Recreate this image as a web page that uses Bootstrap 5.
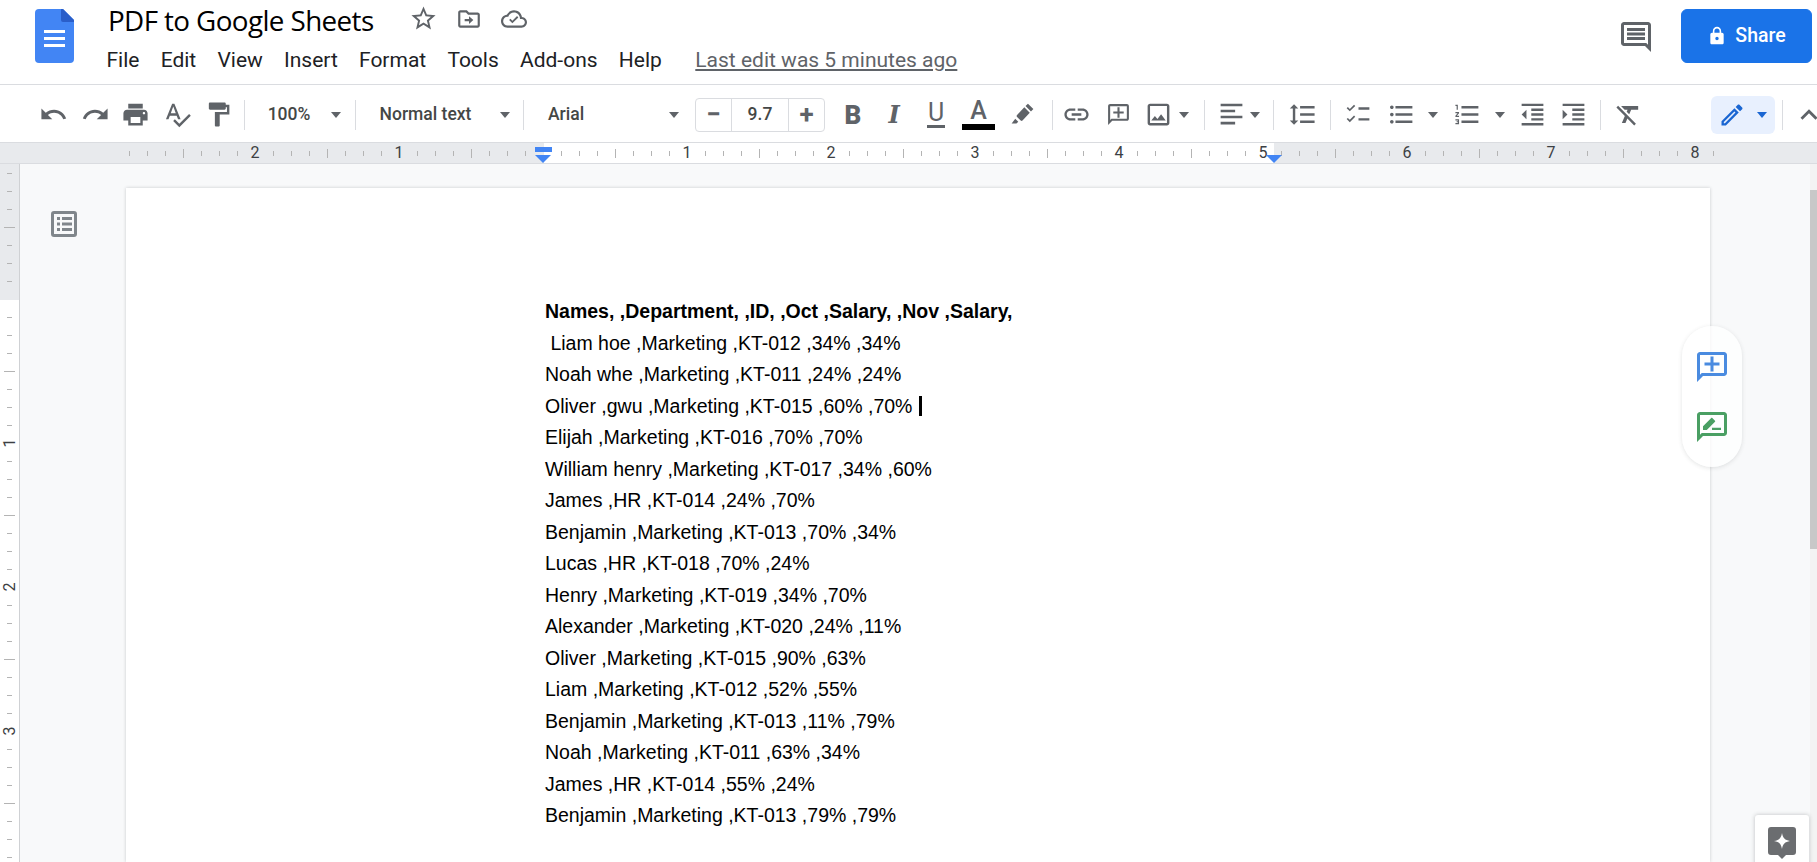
<!DOCTYPE html>
<html lang="en">
<head>
<meta charset="utf-8">
<title>PDF to Google Sheets</title>
<link href="https://cdn.jsdelivr.net/npm/bootstrap@5.3.0/dist/css/bootstrap.min.css" rel="stylesheet">
<style>
html,body{height:100%;}
body{font-family:Roboto,"Liberation Sans",sans-serif;background:#fff;overflow:hidden;color:#202124;}
svg{display:block;fill:currentColor;flex:none;}
.app{height:862px;}
.topbar{height:85px;border-bottom:1px solid #dadce0;padding-left:35px;}
.logo{width:39px;height:54px;margin-top:9px;}
.title-col{margin-left:34px;}
.doc-title{font-family:"Open Sans",Roboto,sans-serif;font-size:27.8px;line-height:34px;margin:3px 0 0 0;color:#000;font-weight:400;width:293px;letter-spacing:-.6px;}
.title-ico{color:#5f6368;width:45px;display:flex;justify-content:center;}
.ic-star{width:29px;height:29px;}
.ic-folder{width:26px;height:26px;}
.ic-cloud{width:26px;height:26px;}
.menu-row{font-size:21px;line-height:24px;margin-top:11px;margin-left:-1.500px;}
.menu-row span{color:#202124;margin-right:21.200px;}
.menu-row .mi-help{margin-right:33.500px;}
.menu-row .last-edit{color:#5f6368;text-decoration:underline;text-underline-offset:2px;margin-right:0;}
.right-tools{margin-right:5px;margin-top:9px;}
.chat-ico{width:36px;height:36px;color:#5f6368;margin:10px 27px 0 0;}
.share-btn{--bs-btn-bg:#1a73e8;--bs-btn-border-color:#1a73e8;--bs-btn-hover-bg:#1a73e8;--bs-btn-hover-border-color:#1a73e8;--bs-btn-color:#fff;--bs-btn-hover-color:#fff;width:131px;height:54px;border-radius:6px;font-size:19.5px;font-weight:500;padding:0;gap:8px;}
.share-btn svg{width:20px;height:20px;}
.toolbar{height:58px;border-bottom:1px solid #dadce0;padding:2px 0 0 32px;display:grid;align-items:center;overflow:hidden;color:#5f6368;
grid-template-columns:42px 42px 39px 45px 37px 14px 76px 18px 20px 121px 37px 1px 128px 43px 130px 56px 26px 58px 27px 60px 1px 46px 38px 42px 10px 30px 24px 23px 15px 43px 13px 42px 44px 19px 51px 13px 53px 29px 25px 30px 68px 64px 14px 39px;}
.tcell{display:flex;align-items:center;justify-content:center;height:38px;}
.tcell svg{width:29px;height:29px;}
.tcell .ic-add{width:25px;height:25px;}
.tsep{width:1px;height:30px;background:#dadce0;}
.tri{width:0;height:0;border-left:5.500px solid transparent;border-right:5.500px solid transparent;border-top:6px solid #5f6368;}
.ttext{font-size:17.5px;font-weight:500;color:#444746;}
.tleft{justify-content:flex-start;padding-left:24px;}
.stepper{height:34px;border:1px solid #dadce0;border-radius:4px;font-size:17.5px;font-weight:500;color:#444746;}
.stepper span{display:flex;align-items:center;justify-content:center;height:100%;}
.st-side{width:35px;font-size:26px;font-weight:700;color:#5f6368;}
.st-mid{flex:1;border-left:1px solid #dadce0;border-right:1px solid #dadce0;}
.fmt-b{font-size:26px;font-weight:900;line-height:1;}
.fmt-i{font-family:"DejaVu Serif",serif;font-size:24px;font-weight:700;font-style:italic;line-height:1;}
.fmt-u{font-size:25px;font-weight:400;line-height:22px;height:26px;width:18px;text-align:center;border-bottom:3px solid #5f6368;}
.fmt-a{font-size:25px;font-weight:500;line-height:24px;text-align:center;}
.fmt-bar{width:33px;height:6px;background:#000;margin-top:1px;}
.pen-pill{height:38px;background:#e8f0fe;border-radius:6px;color:#1a66d2;gap:11px;padding-left:7px;justify-content:flex-start;}
.tcell.pen-pill svg{width:28px;height:28px;}
.pen-pill .tri{border-top-color:#1a66d2;}
.chev{color:#5f6368;}
.tcell.chev svg{width:34px;height:34px;}
.ruler-h{height:21px;position:relative;border-bottom:1px solid #dadce0;font-size:16px;line-height:20px;color:#3c4043;
background:linear-gradient(90deg,#e8eaed 544px,#fff 544px,#fff 1274px,#e8eaed 1274px);padding-left:183px;}
.rtick{position:absolute;left:129px;width:1587px;top:0;height:20px;background-repeat:repeat-x;
background-image:linear-gradient(90deg,transparent 18px,#b4b4b4 18px,#b4b4b4 19px,transparent 19px,transparent 36px,#b4b4b4 36px,#b4b4b4 37px,transparent 37px,transparent 54px,#b4b4b4 54px,#b4b4b4 55px,transparent 55px,transparent 90px,#b4b4b4 90px,#b4b4b4 91px,transparent 91px,transparent 108px,#b4b4b4 108px,#b4b4b4 109px,transparent 109px,transparent 126px,#b4b4b4 126px,#b4b4b4 127px,transparent 127px),
linear-gradient(90deg,transparent 72px,#b4b4b4 72px,#b4b4b4 73px,transparent 73px);
background-size:144px 5px,144px 9px;background-position:126px 8px,126px 6px;}
.rnum{width:144px;text-align:center;flex:none;position:relative;}
.mk-rect{position:absolute;left:535px;top:4px;width:17px;height:5px;background:#4285f4;}
.mk-tri{position:absolute;top:12px;width:0;height:0;border-left:8px solid transparent;border-right:8px solid transparent;border-top:8px solid #4285f4;}
.mk-a{left:535px;}.mk-b{left:1266px;}
.stage{height:698px;position:relative;overflow:hidden;}
.ruler-v{width:20px;flex:none;border-right:1px solid #cfd1d4;padding-top:207px;font-size:16px;color:#3c4043;background-repeat:repeat-y,repeat-y,no-repeat;
background-image:linear-gradient(180deg,transparent 18px,#b4b4b4 18px,#b4b4b4 19px,transparent 19px,transparent 36px,#b4b4b4 36px,#b4b4b4 37px,transparent 37px,transparent 54px,#b4b4b4 54px,#b4b4b4 55px,transparent 55px,transparent 90px,#b4b4b4 90px,#b4b4b4 91px,transparent 91px,transparent 108px,#b4b4b4 108px,#b4b4b4 109px,transparent 109px,transparent 126px,#b4b4b4 126px,#b4b4b4 127px,transparent 127px),
linear-gradient(180deg,transparent 72px,#b4b4b4 72px,#b4b4b4 73px,transparent 73px),
linear-gradient(180deg,#e8eaed 136px,#fff 136px);
background-size:5px 144px,11px 144px,100% 100%;background-position:7px 135px,4px 135px,0 0;}
.vnum{height:144px;display:flex;align-items:center;justify-content:center;}
.vnum span{transform:rotate(-90deg);display:block;line-height:1;}
.canvas{flex:1;background:#f8f9fa;}
.gutter{width:106px;flex:none;padding:47px 0 0 31px;color:#80868b;}
.gutter svg{width:26px;height:26px;}
.sheet{width:1584px;flex:none;margin-top:24px;background:#fff;box-shadow:0 0 3px rgba(60,64,67,.25);padding:108px 0 0 419px;font-family:"Liberation Sans",Arial,sans-serif;font-size:19.5px;line-height:31.5px;color:#000;}
.sheet p{margin:0;white-space:pre;}
.doc-caret{display:inline-block;width:3px;height:20px;background:#000;vertical-align:-3px;margin-left:1px;}
.railbar{width:7px;flex:none;background:#f3f3f3;padding-top:26px;}
.thumb{height:359px;background:#c8c8c8;}
.fab{position:absolute;left:1682px;top:162px;width:60px;height:141px;border-radius:30px;background:rgba(255,255,255,.75);box-shadow:0 1px 4px rgba(60,64,67,.15);gap:24px;padding-top:23px;}
.fab svg{width:36px;height:36px;}
.fab-blue{color:#4a8be0;}.fab-green{color:#4a9f63;}
.explore{position:absolute;left:1755px;top:651px;width:54px;height:60px;background:#fff;border-radius:3px 3px 0 0;box-shadow:0 0 4px rgba(60,64,67,.3);padding:12px 0 0 13px;}
.explore svg{width:28px;height:32px;}
</style>
</head>
<body>
<div class="app d-flex flex-column">
  <header class="topbar d-flex">
    <svg class="logo" viewBox="0 0 39 54" aria-hidden="true"><path fill="#4285f4" d="M4 0h24l11 11v39a4 4 0 0 1-4 4H4a4 4 0 0 1-4-4V4a4 4 0 0 1 4-4z"/><path fill="#2a5ec9" d="M26 0h2l11 11v2H28a2 2 0 0 1-2-2z"/><path fill="#fff" d="M9 21h21v3H9zM9 28h21v3H9zM9 35h21v3H9z"/></svg>
    <div class="title-col d-flex flex-column flex-grow-1">
      <div class="d-flex align-items-center">
        <h1 class="doc-title">PDF to Google Sheets</h1>
        <span class="title-ico"><svg class="ic-star" viewBox="0 0 24 24"><path d="M22 9.240l-7.190-.62L12 2 9.190 8.630 2 9.240l5.460 4.730L5.820 21 12 17.270 18.180 21l-1.630-7.030L22 9.240zM12 15.400l-3.760 2.270 1-4.280-3.320-2.880 4.380-.38L12 6.100l1.710 4.040 4.380.38-3.320 2.880 1 4.280L12 15.400z"/></svg></span>
        <span class="title-ico"><svg class="ic-folder" viewBox="0 0 24 24"><path d="M20 6h-8l-2-2H4c-1.100 0-1.990.9-1.990 2L2 18c0 1.100.9 2 2 2h16c1.100 0 2-.9 2-2V8c0-1.100-.9-2-2-2zm0 12H4V6h5.170l2 2H20v10zm-8-1.500V14H8v-2h4V9.500l4 3.500z"/></svg></span>
        <span class="title-ico"><svg class="ic-cloud" viewBox="0 0 24 24"><path d="M19.350 10.040C18.670 6.590 15.640 4 12 4 9.110 4 6.600 5.640 5.350 8.040 2.340 8.360 0 10.910 0 14c0 3.310 2.690 6 6 6h13c2.760 0 5-2.240 5-5 0-2.640-2.050-4.780-4.650-4.960zM19 18H6c-2.210 0-4-1.790-4-4s1.790-4 4-4h.71C7.370 7.690 9.480 6 12 6c3.040 0 5.500 2.460 5.500 5.500v.5H19c1.660 0 3 1.340 3 3s-1.340 3-3 3zM10.500 16l-3-3 1.200-1.200 1.800 1.800 4.300-4.300 1.200 1.200z"/></svg></span>
      </div>
      <div class="menu-row d-flex">
        <span>File</span><span>Edit</span><span>View</span><span>Insert</span><span>Format</span><span>Tools</span><span>Add-ons</span><span class="mi-help">Help</span><span class="last-edit">Last edit was 5 minutes ago</span>
      </div>
    </div>
    <div class="right-tools d-flex align-items-start">
      <svg class="chat-ico" viewBox="0 0 24 24"><path d="M21.990 4c0-1.100-.89-2-1.990-2H4c-1.100 0-2 .9-2 2v12c0 1.100.9 2 2 2h14l4 4-.01-18zM20 4v13.170L18.830 16H4V4h16zM6 12h12v2H6zm0-3h12v2H6zm0-3h12v2H6z"/></svg>
      <button class="btn share-btn d-flex align-items-center justify-content-center" type="button"><svg viewBox="0 0 24 24"><path d="M18 8h-1V6c0-2.760-2.240-5-5-5S7 3.240 7 6v2H6c-1.100 0-2 .9-2 2v10c0 1.100.9 2 2 2h12c1.100 0 2-.9 2-2V10c0-1.100-.9-2-2-2zm-6 9c-1.100 0-2-.9-2-2s.9-2 2-2 2 .9 2 2-.9 2-2 2zm3.100-9H8.900V6c0-1.710 1.390-3.100 3.100-3.100 1.710 0 3.100 1.390 3.100 3.100v2z"/></svg>Share</button>
    </div>
  </header>

  <div class="toolbar">
    <div class="tcell"><svg viewBox="0 0 24 24"><path d="M12.500 8c-2.650 0-5.050.99-6.900 2.600L2 7v9h9l-3.620-3.620c1.390-1.160 3.160-1.880 5.120-1.880 3.540 0 6.550 2.310 7.600 5.500l2.370-.78C21.080 11.030 17.150 8 12.500 8z"/></svg></div>
    <div class="tcell"><svg viewBox="0 0 24 24"><path d="M18.400 10.600C16.550 8.990 14.150 8 11.500 8c-4.650 0-8.580 3.030-9.960 7.220L3.900 16c1.050-3.190 4.050-5.500 7.600-5.500 1.950 0 3.730.72 5.120 1.880L13 16h9V7l-3.600 3.600z"/></svg></div>
    <div class="tcell"><svg viewBox="0 0 24 24"><path d="M19 8H5c-1.660 0-3 1.340-3 3v6h4v4h12v-4h4v-6c0-1.660-1.340-3-3-3zm-3 11H8v-5h8v5zm3-7c-.55 0-1-.45-1-1s.45-1 1-1 1 .45 1 1-.45 1-1 1zm-1-9H6v4h12V3z"/></svg></div>
    <div class="tcell"><svg viewBox="0 0 24 24"><path d="M12.450 16h2.090L9.430 3H7.570L2.460 16h2.090l1.120-3h5.640l1.140 3zm-6.020-5L8.500 5.480 10.570 11H6.430zm15.160.59l-8.090 8.090L9.830 16l-1.410 1.410 5.090 5.090L23 13l-1.410-1.410z"/></svg></div>
    <div class="tcell"><svg viewBox="0 0 24 24"><path d="M18 4V3c0-.55-.45-1-1-1H5c-.55 0-1 .45-1 1v4c0 .55.45 1 1 1h12c.55 0 1-.45 1-1V6h1v4H9v11c0 .55.45 1 1 1h2c.55 0 1-.45 1-1v-9h8V4h-3z"/></svg></div>
    <div class="tcell"><div class="tsep"></div></div>
    <div class="tcell ttext">100%</div>
    <div class="tcell"><div class="tri"></div></div>
    <div class="tcell"><div class="tsep"></div></div>
    <div class="tcell ttext">Normal text</div>
    <div class="tcell"><div class="tri"></div></div>
    <div class="tcell"><div class="tsep"></div></div>
    <div class="tcell ttext tleft">Arial</div>
    <div class="tcell"><div class="tri"></div></div>
    <div class="stepper d-flex"><span class="st-side">&#8722;</span><span class="st-mid">9.7</span><span class="st-side">+</span></div>
    <div class="tcell fmt-b">B</div>
    <div class="tcell fmt-i">I</div>
    <div class="tcell"><div class="fmt-u">U</div></div>
    <div class="tcell"><div class="d-flex flex-column align-items-center"><div class="fmt-a">A</div><div class="fmt-bar"></div></div></div>
    <div class="tcell"><svg viewBox="0 0 24 24"><path d="M16.500 3 21 7.500l-2 2L14.500 5zM13.500 6l4.500 4.500-6 6.500c-.5.5-1 .5-1.500 0l-3-3c-.5-.5-.5-1 0-1.500zM6 15.500 8.500 18 7 19.500H3z"/></svg></div>
    <div class="tcell"><div class="tsep"></div></div>
    <div class="tcell"><svg viewBox="0 0 24 24"><path d="M3.900 12c0-1.710 1.390-3.100 3.100-3.100h4V7H7c-2.760 0-5 2.240-5 5s2.240 5 5 5h4v-1.900H7c-1.710 0-3.100-1.390-3.100-3.100zM8 13h8v-2H8v2zm9-6h-4v1.900h4c1.710 0 3.100 1.390 3.100 3.100s-1.390 3.100-3.100 3.100h-4V17h4c2.760 0 5-2.240 5-5s-2.240-5-5-5z"/></svg></div>
    <div class="tcell"><svg class="ic-add" viewBox="0 0 24 24"><path d="M20 2H4c-1.100 0-2 .9-2 2v18l4-4h14c1.100 0 2-.9 2-2V4c0-1.100-.9-2-2-2zm0 14H5.170L4 17.170V4h16v12zM13 5h-2v4H7v2h4v4h2v-4h4V9h-4z"/></svg></div>
    <div class="tcell"><svg viewBox="0 0 24 24"><path d="M19 5v14H5V5h14m0-2H5c-1.100 0-2 .9-2 2v14c0 1.100.9 2 2 2h14c1.100 0 2-.9 2-2V5c0-1.100-.9-2-2-2zm-4.860 8.860l-3 3.870L9 13.140 6 17h12l-3.860-5.140z"/></svg></div>
    <div class="tcell"><div class="tri"></div></div>
    <div class="tcell"><div class="tsep"></div></div>
    <div class="tcell"><svg viewBox="0 0 24 24"><path d="M3 3h18v2.200H3zM3 8h12v2.200H3zM3 13h18v2.200H3zM3 18h12v2.200H3z"/></svg></div>
    <div class="tcell"><div class="tri"></div></div>
    <div class="tcell"><div class="tsep"></div></div>
    <div class="tcell"><svg viewBox="0 0 24 24"><path d="M6 7h2.500L5 3.500 1.500 7H4v10H1.500L5 20.500 8.500 17H6V7zm4-2v2h12V5H10zm0 14h12v-2H10v2zm0-6h12v-2H10v2z"/></svg></div>
    <div class="tcell"><div class="tsep"></div></div>
    <div class="tcell"><svg viewBox="0 0 24 24"><path d="M2.200 6.800 3.200 5.800 4.800 7.400 8.300 3.900 9.300 4.900 4.800 9.400zM2.200 15.800 3.200 14.800 4.800 16.400 8.300 12.900 9.300 13.900 4.800 18.400zM12 6h9v2h-9zM12 15h9v2h-9z"/></svg></div>
    <div class="tcell"><svg viewBox="0 0 24 24"><path d="M4 10.500c-.83 0-1.500.67-1.500 1.500s.67 1.500 1.500 1.500 1.500-.67 1.500-1.500-.67-1.500-1.500-1.500zm0-6c-.83 0-1.500.67-1.500 1.500S3.170 7.500 4 7.500 5.500 6.830 5.500 6 4.830 4.500 4 4.500zm0 12c-.83 0-1.500.68-1.500 1.500s.68 1.500 1.500 1.500 1.500-.68 1.500-1.500-.67-1.500-1.500-1.500zM7 19h14v-2H7v2zm0-6h14v-2H7v2zm0-8v2h14V5H7z"/></svg></div>
    <div class="tcell"><div class="tri"></div></div>
    <div class="tcell"><svg viewBox="0 0 24 24"><path d="M2 17h2v.5H3v1h1v.5H2v1h3v-4H2v1zm1-9h1V4H2v1h1v3zm-1 3h1.800L2 13.100v.9h3v-1H3.200L5 10.900V10H2v1zm5-6v2h14V5H7zm0 14h14v-2H7v2zm0-6h14v-2H7v2z"/></svg></div>
    <div class="tcell"><div class="tri"></div></div>
    <div class="tcell"><svg viewBox="0 0 24 24"><path d="M11 17h10v-2H11v2zm-8-5l4 4V8l-4 4zm0 9h18v-2H3v2zM3 3v2h18V3H3zm8 6h10V7H11v2zm0 4h10v-2H11v2z"/></svg></div>
    <div class="tcell"><svg viewBox="0 0 24 24"><path d="M3 21h18v-2H3v2zM3 8v8l4-4-4-4zm8 9h10v-2H11v2zM3 3v2h18V3H3zm8 6h10V7H11v2zm0 4h10v-2H11v2z"/></svg></div>
    <div class="tcell"><div class="tsep"></div></div>
    <div class="tcell"><svg viewBox="0 0 24 24"><path d="M6 5v.18L8.820 8h2.400l-.72 1.680 2.100 2.100L14.210 8H20V5H6zM3.410 4.860L2 6.270l6.970 6.970L6.500 19h3l1.570-3.660L16.730 21l1.410-1.410z"/></svg></div>
    <div></div>
    <div class="tcell pen-pill"><svg viewBox="0 0 24 24"><path d="M3 17.250V21h3.750L17.810 9.940l-3.750-3.750L3 17.250zM5.920 19H5v-.92l9.060-9.060.92.92L5.920 19zM20.710 5.630l-2.340-2.340c-.2-.2-.45-.29-.71-.29s-.51.1-.7.29l-1.830 1.830 3.750 3.750 1.830-1.830c.39-.39.39-1.020 0-1.410z"/></svg><div class="tri"></div></div>
    <div class="tcell"><div class="tsep"></div></div>
    <div class="tcell chev"><svg viewBox="0 0 24 24"><path d="M7.410 15.410L12 10.830l4.590 4.580L18 14l-6-6-6 6z"/></svg></div>
  </div>

  <div class="ruler-h d-flex">
    <div class="rtick"></div>
    <span class="rnum">2</span><span class="rnum">1</span><span class="rnum"></span><span class="rnum">1</span><span class="rnum">2</span><span class="rnum">3</span><span class="rnum">4</span><span class="rnum">5</span><span class="rnum">6</span><span class="rnum">7</span><span class="rnum">8</span>
    <div class="mk-rect"></div><div class="mk-tri mk-a"></div><div class="mk-tri mk-b"></div>
  </div>

  <div class="stage d-flex">
    <div class="ruler-v">
      <div class="vnum"><span>1</span></div><div class="vnum"><span>2</span></div><div class="vnum"><span>3</span></div>
    </div>
    <div class="canvas d-flex overflow-hidden">
      <div class="gutter"><svg viewBox="0 0 26 26"><path fill-rule="evenodd" d="M3 0h20a3 3 0 0 1 3 3v20a3 3 0 0 1-3 3H3a3 3 0 0 1-3-3V3a3 3 0 0 1 3-3zm0 3v20h20V3zM6 6h3v3H6zM11 6h10v3H11zM6 11.500h3v3H6zM11 11.500h10v3H11zM6 17h3v3H6zM11 17h10v3H11z"/></svg></div>
      <main class="sheet">
<p class="fw-bold">Names, ,Department, ,ID, ,Oct ,Salary, ,Nov ,Salary,</p>
<p> Liam hoe ,Marketing ,KT-012 ,34% ,34%</p>
<p>Noah whe ,Marketing ,KT-011 ,24% ,24%</p>
<p>Oliver ,gwu ,Marketing ,KT-015 ,60% ,70% <span class="doc-caret"></span></p>
<p>Elijah ,Marketing ,KT-016 ,70% ,70%</p>
<p>William henry ,Marketing ,KT-017 ,34% ,60%</p>
<p>James ,HR ,KT-014 ,24% ,70%</p>
<p>Benjamin ,Marketing ,KT-013 ,70% ,34%</p>
<p>Lucas ,HR ,KT-018 ,70% ,24%</p>
<p>Henry ,Marketing ,KT-019 ,34% ,70%</p>
<p>Alexander ,Marketing ,KT-020 ,24% ,11%</p>
<p>Oliver ,Marketing ,KT-015 ,90% ,63%</p>
<p>Liam ,Marketing ,KT-012 ,52% ,55%</p>
<p>Benjamin ,Marketing ,KT-013 ,11% ,79%</p>
<p>Noah ,Marketing ,KT-011 ,63% ,34%</p>
<p>James ,HR ,KT-014 ,55% ,24%</p>
<p>Benjamin ,Marketing ,KT-013 ,79% ,79%</p>
      </main>
      <div class="flex-grow-1"></div>
      <div class="railbar"><div class="thumb"></div></div>
    </div>
    <div class="fab d-flex flex-column align-items-center">
      <svg class="fab-blue" viewBox="0 0 24 24"><path d="M20 2H4c-1.100 0-2 .9-2 2v18l4-4h14c1.100 0 2-.9 2-2V4c0-1.100-.9-2-2-2zm0 14H5.170L4 17.170V4h16v12zM13 5h-2v4H7v2h4v4h2v-4h4V9h-4z"/></svg>
      <svg class="fab-green" viewBox="0 0 24 24"><path d="M20 2H4c-1.100 0-2 .9-2 2v18l4-4h14c1.100 0 2-.9 2-2V4c0-1.100-.9-2-2-2zm0 14H5.170L4 17.170V4h16v12zM6 14v-2.500l5.500-5.500c.2-.2.500-.2.700 0l1.800 1.800c.2.200.2.500 0 .7L8.500 14zM12 12.500h6V14h-6z"/></svg>
    </div>
    <div class="explore"><svg viewBox="0 0 28 32"><path fill="#6b6d70" d="M3 0h22a3 3 0 0 1 3 3v22a3 3 0 0 1-3 3h-7l-4 4-4-4H3a3 3 0 0 1-3-3V3a3 3 0 0 1 3-3z"/><path fill="#fff" d="M14 6c.9 5.200 2.800 7.100 8 8-5.200.9-7.100 2.800-8 8-.9-5.200-2.800-7.100-8-8 5.200-.9 7.100-2.800 8-8z"/></svg></div>
  </div>
</div>
<script src="https://cdn.jsdelivr.net/npm/bootstrap@5.3.0/dist/js/bootstrap.bundle.min.js"></script>
</body>
</html>
